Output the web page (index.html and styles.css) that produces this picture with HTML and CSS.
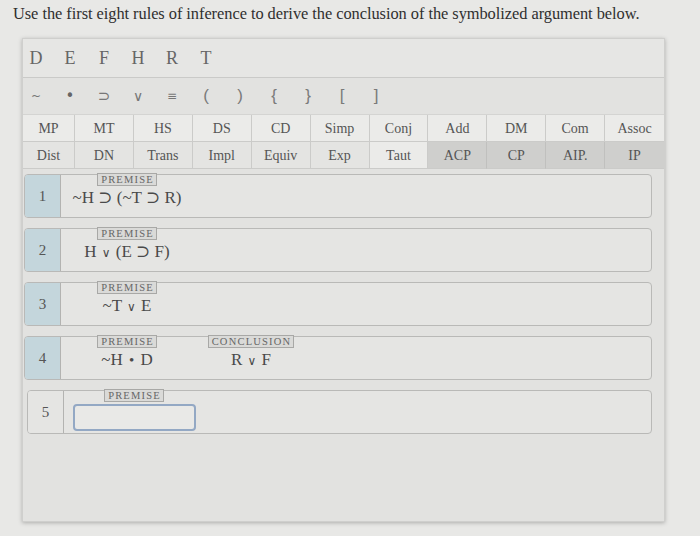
FILE: index.html
```html
<!DOCTYPE html>
<html>
<head>
<meta charset="utf-8">
<link rel="stylesheet" href="styles.css">
</head>
<body>
<p class="title">Use the first eight rules of inference to derive the conclusion of the symbolized argument below.</p>
<div class="panel">
  <div class="vars">
    <span>D</span><span>E</span><span>F</span><span>H</span><span>R</span><span>T</span>
  </div>
  <div class="ops">
    <span class="tilde">~</span><span class="dot">•</span><span>⊃</span><span class="vee">∨</span><span class="eq">≡</span><span class="br">(</span><span class="br">)</span><span class="br">{</span><span class="br">}</span><span class="br">[</span><span class="br">]</span>
  </div>
  <div class="rules">
    <div class="cell">MP</div><div class="cell">MT</div><div class="cell">HS</div><div class="cell">DS</div><div class="cell">CD</div><div class="cell">Simp</div><div class="cell">Conj</div><div class="cell">Add</div><div class="cell">DM</div><div class="cell">Com</div><div class="cell last">Assoc</div>
    <div class="cell r2">Dist</div><div class="cell r2">DN</div><div class="cell r2">Trans</div><div class="cell r2">Impl</div><div class="cell r2">Equiv</div><div class="cell r2">Exp</div><div class="cell r2 taut">Taut</div><div class="cell r2 dark">ACP</div><div class="cell r2 dark">CP</div><div class="cell r2 dark">AIP.</div><div class="cell r2 dark last">IP</div>
  </div>
  <div class="proof">
    <div class="line">
      <div class="num">1</div>
      <div class="entries">
        <div class="entry"><span class="badge">PREMISE</span><span class="formula">~H ⊃ (~T ⊃ R)</span></div>
      </div>
    </div>
    <div class="line">
      <div class="num">2</div>
      <div class="entries">
        <div class="entry"><span class="badge">PREMISE</span><span class="formula">H <span class="or">∨</span> (E ⊃ F)</span></div>
      </div>
    </div>
    <div class="line">
      <div class="num">3</div>
      <div class="entries">
        <div class="entry"><span class="badge">PREMISE</span><span class="formula">~T <span class="or">∨</span> E</span></div>
      </div>
    </div>
    <div class="line">
      <div class="num">4</div>
      <div class="entries">
        <div class="entry"><span class="badge">PREMISE</span><span class="formula">~H <span class="and">•</span> D</span></div>
        <div class="entry"><span class="badge">CONCLUSION</span><span class="formula">R <span class="or">∨</span> F</span></div>
      </div>
    </div>
    <div class="line last-line">
      <div class="num plain">5</div>
      <div class="entries">
        <div class="entry"><span class="badge">PREMISE</span><span class="input"></span></div>
      </div>
    </div>
  </div>
</div>
</body>
</html>
```
FILE: styles.css
```css
html, body {
  margin: 0;
  padding: 0;
}
body {
  background: #e8e8e6;
  font-family: "Liberation Serif", "DejaVu Serif", serif;
  color: #444;
  width: 700px;
  height: 536px;
  overflow: hidden;
}
.title {
  margin: 0;
  padding: 4px 0 0 13px;
  height: 26px;
  font-size: 16.4px;
  color: #2f2f2f;
  letter-spacing: -0.05px;
}
.panel {
  margin: 8px 0 0 22px;
  width: 643px;
  height: 484px;
  background: #e2e2e0;
  border: 1px solid #cfcfcd;
  box-shadow: 0 1px 4px rgba(0,0,0,0.25);
  box-sizing: border-box;
}
.vars, .ops {
  display: flex;
  gap: 8px;
  align-items: center;
  padding-left: 0;
}
.vars {
  height: 38px;
  border-bottom: 1px solid #cacac8;
  background: #e6e6e4;
}
.vars span {
  width: 26px;
  text-align: center;
  font-size: 18px;
  color: #666;
}
.ops {
  height: 36px;
  border-bottom: 1px solid #d4d4d2;
}
.ops span {
  width: 26px;
  text-align: center;
  font-family: "DejaVu Sans", sans-serif;
  font-size: 15px;
  color: #777;
}
.ops .tilde {
  font-size: 12px;
}
.ops .dot {
  font-size: 15px;
  color: #666;
}
.ops .vee {
  font-size: 14px;
}
.ops .eq {
  font-size: 12px;
}
.ops .br {
  font-family: "Liberation Sans", sans-serif;
  font-size: 17px;
  color: #7a7a7a;
}
.rules {
  display: grid;
  grid-template-columns: 52px repeat(10, 1fr);
}
.cell {
  height: 27px;
  line-height: 27px;
  text-align: center;
  font-size: 14px;
  color: #555;
  background: #ebebe9;
  border-right: 1px solid #cbcbc9;
  border-bottom: 1px solid #cbcbc9;
  box-sizing: border-box;
}
.cell.last {
  border-right: none;
}
.cell.r2 {
  background: #e4e4e2;
}
.cell.taut {
  background: #ebebe9;
}
.cell.dark {
  background: #cfcfcd;
  border-right-color: #c0c0be;
}
.proof {
  display: flex;
  flex-direction: column;
  gap: 10px;
  padding: 5px 12px 0 1px;
}
.line {
  display: flex;
  height: 44px;
  border: 1px solid #b9b9b7;
  border-radius: 4px;
  background: #e5e5e3;
  box-sizing: border-box;
}
.last-line {
  margin-left: 3px;
}
.num {
  width: 35px;
  flex: none;
  background: #c4d6dc;
  border-right: 1px solid #b3b3b1;
  border-radius: 3px 0 0 3px;
  display: flex;
  align-items: center;
  justify-content: center;
  font-size: 15px;
  color: #555;
}
.num.plain {
  background: #e5e5e3;
}
.entries {
  display: flex;
  padding-left: 4px;
}
.last-line .entries {
  padding-left: 8px;
}
.entry {
  width: 124px;
  display: flex;
  flex-direction: column;
  align-items: center;
  margin-top: -2px;
}
.badge {
  font-size: 10.5px;
  line-height: 11px;
  letter-spacing: 1.2px;
  padding: 0 2px 0 3px;
  border: 1px solid #a8a8a6;
  background: #dadad8;
  color: #666;
}
.formula {
  margin-top: 2px;
  font-size: 17px;
  line-height: 20px;
  color: #4a4a4a;
}
.formula .or {
  font-family: "DejaVu Sans", sans-serif;
  font-size: 12px;
  padding: 0 1px;
}
.formula .and {
  font-size: 15px;
  padding: 0 2px;
}
.input {
  margin-top: 2px;
  width: 123px;
  height: 27px;
  border: 2px solid #93a8c4;
  border-radius: 4px;
  background: #e9e9e7;
  box-sizing: border-box;
}
```
